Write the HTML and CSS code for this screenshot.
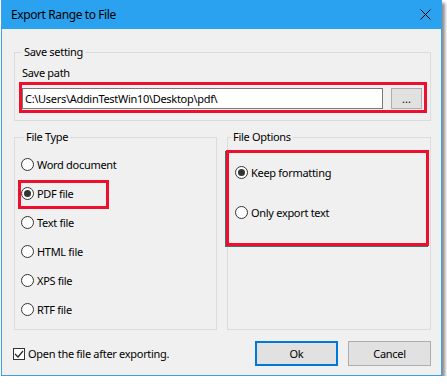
FILE: index.html
```html
<!DOCTYPE html>
<html lang="en">
<head>
  <meta charset="UTF-8">
  <title>Export Range to File</title>
  <link rel="stylesheet" href="styles.css">
</head>
<body>
  <div class="window">
    <div class="titlebar">
      <span class="title">Export Range to File</span>
      <svg class="close" width="11" height="11" viewBox="0 0 11 11"><path d="M0.5 0.5L10.5 10.5M10.5 0.5L0.5 10.5" stroke="#000" stroke-width="1" fill="none"/></svg>
    </div>

    <div class="content">
      <fieldset class="group save-group">
        <legend>Save setting</legend>
        <div class="label">Save path</div>
        <div class="path-row">
          <input type="text" class="path" value="C:\Users\AddinTestWin10\Desktop\pdf\">
          <button class="browse">...</button>
        </div>
      </fieldset>

      <div class="columns">
        <fieldset class="group type-group">
          <legend>File Type</legend>
          <div class="radio"><span class="dot"></span>Word document</div>
          <div class="radio checked marked"><span class="dot"></span>PDF file</div>
          <div class="radio"><span class="dot"></span>Text file</div>
          <div class="radio"><span class="dot"></span>HTML file</div>
          <div class="radio"><span class="dot"></span>XPS file</div>
          <div class="radio"><span class="dot"></span>RTF file</div>
        </fieldset>

        <fieldset class="group options-group">
          <legend>File Options</legend>
          <div class="options">
            <div class="radio checked"><span class="dot"></span>Keep formatting</div>
            <div class="radio"><span class="dot"></span>Only export text</div>
          </div>
        </fieldset>
      </div>

      <div class="footer">
        <div class="check">
          <span class="box"><svg width="10" height="10" viewBox="0 0 10 10"><path d="M1 5L4 8L9 2" stroke="#222" stroke-width="1.2" fill="none"/></svg></span>
          Open the file after exporting.
        </div>
        <button class="btn default">Ok</button>
        <button class="btn">Cancel</button>
      </div>
    </div>
  </div>
</body>
</html>
```

FILE: styles.css
```css
:root {
  --title: #2aa2ef;
  --edge: #3b9ee6;
  --face: #f0f0f0;
  --line: #dcdcdc;
  --mark: #ee0f2f;
}

body {
  margin: 0;
  background: #fff;
  font-family: "Noto Sans", sans-serif;
  font-size: 11px;
  letter-spacing: -0.3px;
  color: #000;
}
.window {
  width: 439px;
  margin-left: 1px;
  border: 1px solid var(--edge);
  border-top: 0;
  background: var(--face);
  box-shadow: 3px 3px 3px rgba(0, 0, 0, 0.45);
}
.titlebar {
  height: 29px;
  background: var(--title);
  display: flex;
  align-items: center;
  justify-content: space-between;
  padding: 0 10px 0 9px;
  font-size: 12px;
  letter-spacing: -0.4px;
}
.content {
  height: 346px;
  box-sizing: border-box;
  padding: 16px 10px 0 12px;
}
.group {
  margin: 0;
  padding: 0;
  border: 1px solid var(--line);
  min-width: 0;
}
.group legend {
  padding: 0 2px;
  margin-left: 3px;
  line-height: 14px;
}
.save-group {
  padding: 7px 3px 7px 4px;
}
.label {
  margin-left: 3px;
  line-height: 14px;
}
.path-row {
  margin-top: 2px;
  display: flex;
  align-items: center;
  gap: 8px;
  border: 3px solid var(--mark);
  padding: 3px 2px 1px 0;
}
.path {
  width: 361px;
  height: 21px;
  box-sizing: border-box;
  border: 1px solid #7a7a7a;
  padding: 0 2px;
  margin: 0;
  font: inherit;
  letter-spacing: inherit;
  background: #fff;
}
.browse {
  width: 31px;
  height: 21px;
  padding: 0;
  border: 1px solid #adadad;
  background: #e1e1e1;
  font: inherit;
  line-height: 14px;
}
.columns {
  display: flex;
  gap: 10px;
  margin-top: 9px;
}
.type-group, .options-group {
  height: 200px;
  box-sizing: border-box;
}
.type-group {
  width: 203px;
  padding: 6px 0 0 6px;
}
.options-group {
  width: 204px;
}
.radio {
  display: flex;
  align-items: center;
  height: 29px;
}
.dot {
  width: 13px;
  height: 13px;
  box-sizing: border-box;
  border: 1px solid #333;
  border-radius: 50%;
  background: #fff;
  margin-right: 3px;
  display: flex;
  align-items: center;
  justify-content: center;
}
.checked .dot::after {
  content: "";
  width: 7px;
  height: 7px;
  border-radius: 50%;
  background: #333;
}
.marked {
  position: relative;
}
.marked::after {
  content: "";
  position: absolute;
  left: -3px;
  top: 1px;
  width: 91px;
  height: 29px;
  box-sizing: border-box;
  border: 3px solid var(--mark);
}
.options {
  margin: 6px 0 0 -2px;
  width: 203px;
  height: 96px;
  box-sizing: border-box;
  border: 3px solid var(--mark);
  box-shadow: -1px 1px 0 #4d6b6b;
  padding: 5px 0 0 6px;
  display: flex;
  flex-direction: column;
  gap: 12px;
}
.options .radio {
  height: 28px;
}
.footer {
  display: flex;
  align-items: center;
  height: 25px;
  margin-top: 11px;
}
.check {
  display: flex;
  align-items: center;
  margin-left: -1px;
}
.box {
  width: 12px;
  height: 12px;
  box-sizing: border-box;
  border: 1px solid #333;
  background: #fff;
  margin-right: 3px;
  display: flex;
  align-items: center;
  justify-content: center;
}
.btn {
  width: 83px;
  height: 25px;
  margin: 0 0 0 10px;
  padding: 0;
  border: 1px solid #adadad;
  background: #e1e1e1;
  font: inherit;
  letter-spacing: inherit;
}
.btn.default {
  margin-left: auto;
  border: 2px solid #0078d7;
}
```
